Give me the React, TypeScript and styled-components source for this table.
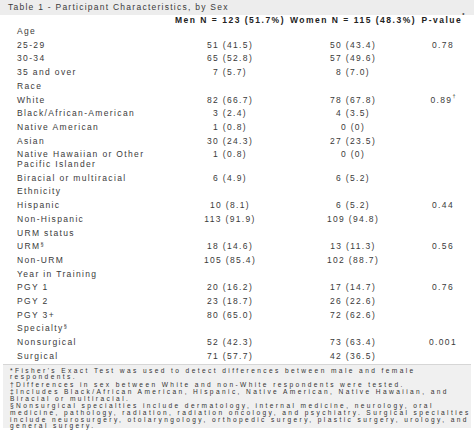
import React from "react";
import styled, { createGlobalStyle } from "styled-components";

const GlobalStyle = createGlobalStyle`
  html, body { margin: 0; padding: 0; background: #ffffff; }
  body {
    font-family: "Liberation Sans", Arial, Helvetica, sans-serif;
    color: #3a3a3a;
  }
`;

const Page = styled.div`
  width: 474px;
  height: 431px;
  overflow: hidden;
  display: flex;
  flex-direction: column;
`;

const TitleBar = styled.div`
  height: 15px;
  flex: none;
  background: #ededed;
  padding-left: 8px;
  font-size: 8.5px;
  letter-spacing: 1.25px;
  line-height: 15px;
  white-space: nowrap;
  color: #3a3a3a;
`;

const RowGrid = styled.div`
  display: grid;
  flex: none;
  grid-template-columns: 175px 110px 136px 44px;
  align-items: start;
  font-size: 8.5px;
  letter-spacing: 1.35px;
`;

const HeaderRow = styled(RowGrid)`
  height: 10px;
  line-height: 11px;
  font-weight: bold;
  letter-spacing: 1.5px;
  color: #222;
`;

const Row = styled(RowGrid)`
  padding: 2px 0;
  line-height: 9.7px;
`;

const LabelCell = styled.div`
  padding-left: 17px;
  padding-right: 14px;
`;

const ValueCell = styled.div`
  display: flex;
  justify-content: center;
  white-space: nowrap;
`;

const Sup = styled.sup`
  font-size: 5.5px;
  line-height: 0;
  vertical-align: 3px;
  letter-spacing: 0;
`;

const FootBox = styled.div`
  margin: 0 3px;
  height: 64px;
  flex: none;
  box-sizing: border-box;
  background: #f0f0f0;
  border-top: 1px solid #d6d6d6;
  padding: 3px 7px;
  font-size: 6.6px;
  letter-spacing: 2.4px;
  line-height: 6.7px;
  color: #333;
`;

const FootPara = styled.p`
  margin: 0 0 0.7px;
  white-space: nowrap;
`;

type R = { label: React.ReactNode; men?: string; women?: string; p?: React.ReactNode };

const rows: R[] = [
  { label: "Age" },
  { label: "25-29", men: "51 (41.5)", women: "50 (43.4)", p: "0.78" },
  { label: "30-34", men: "65 (52.8)", women: "57 (49.6)" },
  { label: "35 and over", men: "7 (5.7)", women: "8 (7.0)" },
  { label: "Race" },
  { label: "White", men: "82 (66.7)", women: "78 (67.8)", p: <>0.89<Sup>†</Sup></> },
  { label: "Black/African-American", men: "3 (2.4)", women: "4 (3.5)" },
  { label: "Native American", men: "1 (0.8)", women: "0 (0)" },
  { label: "Asian", men: "30 (24.3)", women: "27 (23.5)" },
  { label: "Native Hawaiian or Other Pacific Islander", men: "1 (0.8)", women: "0 (0)" },
  { label: "Biracial or multiracial", men: "6 (4.9)", women: "6 (5.2)" },
  { label: "Ethnicity" },
  { label: "Hispanic", men: "10 (8.1)", women: "6 (5.2)", p: "0.44" },
  { label: "Non-Hispanic", men: "113 (91.9)", women: "109 (94.8)" },
  { label: "URM status" },
  { label: <>URM<Sup>§</Sup></>, men: "18 (14.6)", women: "13 (11.3)", p: "0.56" },
  { label: "Non-URM", men: "105 (85.4)", women: "102 (88.7)" },
  { label: "Year in Training" },
  { label: "PGY 1", men: "20 (16.2)", women: "17 (14.7)", p: "0.76" },
  { label: "PGY 2", men: "23 (18.7)", women: "26 (22.6)" },
  { label: "PGY 3+", men: "80 (65.0)", women: "72 (62.6)" },
  { label: <>Specialty<Sup>§</Sup></> },
  { label: "Nonsurgical", men: "52 (42.3)", women: "73 (63.4)", p: "0.001" },
  { label: "Surgical", men: "71 (57.7)", women: "42 (36.5)" },
];

export default function App() {
  return (
    <Page>
      <GlobalStyle />
      <TitleBar>Table 1 - Participant Characteristics, by Sex</TitleBar>
      <HeaderRow>
        <LabelCell />
        <ValueCell>Men N = 123 (51.7%)</ValueCell>
        <ValueCell>Women N = 115 (48.3%)</ValueCell>
        <ValueCell>P-value<Sup>*</Sup></ValueCell>
      </HeaderRow>
      {rows.map((r, i) => (
        <Row key={i}>
          <LabelCell>{r.label}</LabelCell>
          <ValueCell>{r.men}</ValueCell>
          <ValueCell>{r.women}</ValueCell>
          <ValueCell>{r.p}</ValueCell>
        </Row>
      ))}
      <FootBox>
        <FootPara>
          *Fisher's Exact Test was used to detect differences between male and female
          <br />
          respondents.
        </FootPara>
        <FootPara>†Differences in sex between White and non-White respondents were tested.</FootPara>
        <FootPara>
          ‡Includes Black/African American, Hispanic, Native American, Native Hawaiian, and
          <br />
          Biracial or multiracial.
        </FootPara>
        <FootPara>
          §Nonsurgical specialties include dermatology, internal medicine, neurology, oral
          <br />
          medicine, pathology, radiation, radiation oncology, and psychiatry. Surgical specialties
          <br />
          include neurosurgery, otolaryngology, orthopedic surgery, plastic surgery, urology, and
          <br />
          general surgery.
        </FootPara>
      </FootBox>
    </Page>
  );
}
